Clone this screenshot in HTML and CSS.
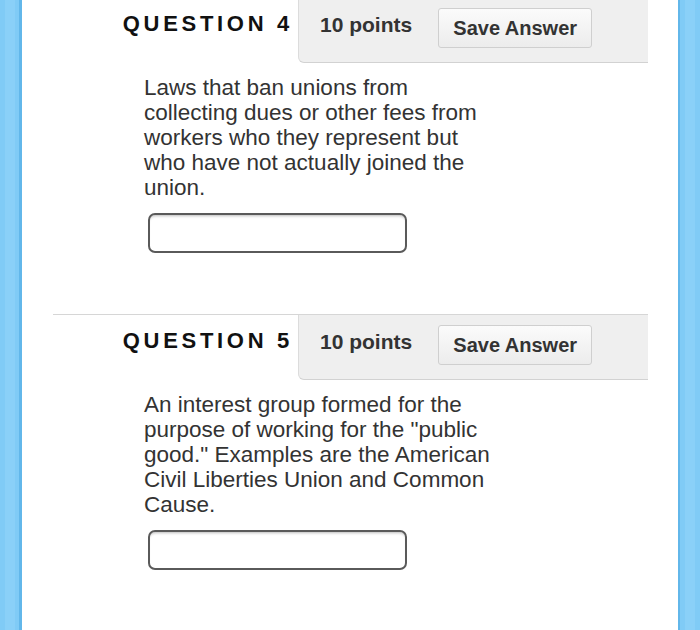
FILE: index.html
```html
<!DOCTYPE html>
<html lang="en">
    <head>
        <meta charset="UTF-8" />
        <meta name="viewport" content="width=device-width, initial-scale=1.0" />
        <title>Quiz</title>
        <link rel="stylesheet" href="styles.css">
    </head>

    <body>
        <div class="rail rail-left"></div>

        <main class="sheet">
            <!-- question 4 -->
            <section class="question">
                <div class="q-head">
                    <h2 class="q-title">QUESTION 4</h2>
                    <div class="q-points">
                        <span>10 points</span>
                        <button class="save">Save Answer</button>
                    </div>
                </div>
                <p class="q-text">
                    Laws that ban unions from collecting dues or other fees from
                    workers who they represent but who have not actually joined the
                    union.
                </p>
                <input class="answer" type="text" />
            </section>

            <!-- question 5 -->
            <section class="question">
                <div class="q-head">
                    <h2 class="q-title">QUESTION 5</h2>
                    <div class="q-points">
                        <span>10 points</span>
                        <button class="save">Save Answer</button>
                    </div>
                </div>
                <p class="q-text">
                    An interest group formed for the purpose of working for the
                    "public good." Examples are the American Civil Liberties Union
                    and Common Cause.
                </p>
                <input class="answer" type="text" />
            </section>
        </main>

        <div class="rail rail-right"></div>
    </body>
</html>
```
FILE: styles.css
```css
* {
    margin: 0;
    padding: 0;
    box-sizing: border-box;
}

html,
body {
    height: 100%;
    overflow: hidden;
}

body {
    display: flex;
    font-family: 'Liberation Sans', Arial, Helvetica, sans-serif;
    color: #333;
    background: #fff;
}

/* blue side rails with faint plus marks */
.rail {
    width: 22px;
    flex-shrink: 0;
    background-color: #80cbf6;
    background-image:
        linear-gradient(#8ad0f8, #8ad0f8),
        linear-gradient(#8ad0f8, #8ad0f8);
    background-size: 10px 2px, 2px 10px;
    background-repeat: repeat-y;
    background-position: 5px 21px, 9px 17px;
}
.rail-left {
    border-right: 3px solid #62b7ea;
}
.rail-right {
    border-left: 2px solid #62b7ea;
}

.sheet {
    flex: 1;
    padding-left: 31px;
    padding-right: 30px;
    margin-top: -3px;
}

.question {
    border-top: 1px solid #d6d6d6;
    height: 317px;
}

.q-head {
    display: flex;
    height: 65px;
}

.q-title {
    width: 245px;
    padding-right: 5px;
    padding-top: 13px;
    text-align: right;
    font-size: 22px;
    font-weight: bold;
    letter-spacing: 3.7px;
    color: #111;
}

.q-points {
    flex: 1;
    display: flex;
    align-items: flex-start;
    gap: 26px;
    padding-left: 21px;
    padding-top: 10px;
    background: #efefef;
    border-left: 1px solid #dcdcdc;
    border-bottom: 1px solid #d2d2d2;
    border-bottom-left-radius: 6px;
    font-size: 21px;
    font-weight: bold;
}
.q-points span {
    line-height: 34px;
}

.save {
    width: 154px;
    height: 40px;
    border: 1px solid #cfcfcf;
    border-radius: 3px;
    background: linear-gradient(#fbfbfb, #ececec);
    font-family: inherit;
    font-size: 20px;
    font-weight: bold;
    color: #333;
}

.q-text {
    width: 360px;
    margin: 12px 0 0 91px;
    font-size: 22.5px;
    line-height: 25px;
    color: #333;
}

.answer {
    display: block;
    width: 259px;
    height: 40px;
    margin: 13px 0 0 95px;
    border: 2px solid #5a5a5a;
    border-radius: 7px;
    box-shadow: inset 0 3px 3px -2px #bbb;
}
```
